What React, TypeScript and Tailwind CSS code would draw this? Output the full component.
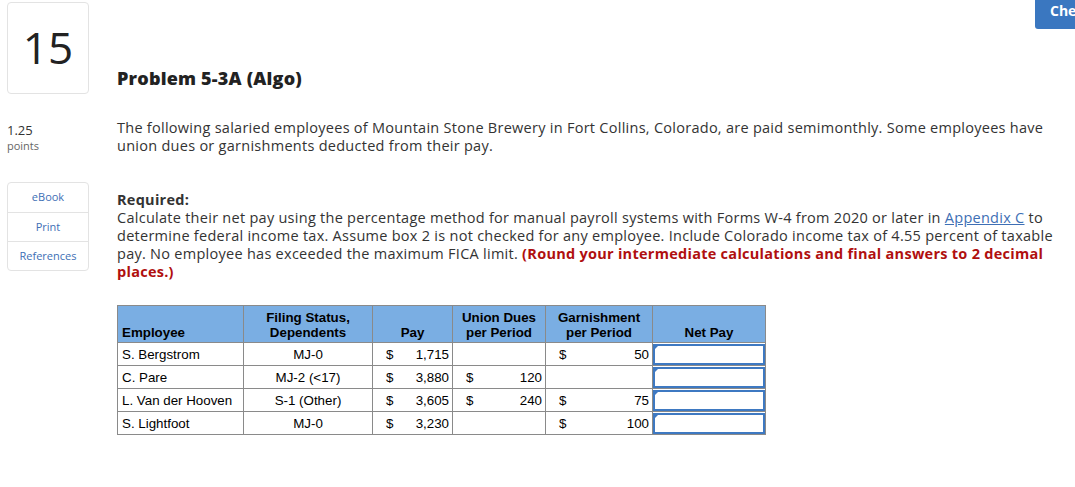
import React from "react";

const rows = [
  { name: "S. Bergstrom", status: "MJ-0", pay: "1,715", union: "", garn: "50" },
  { name: "C. Pare", status: "MJ-2 (<17)", pay: "3,880", union: "120", garn: "" },
  { name: "L. Van der Hooven", status: "S-1 (Other)", pay: "3,605", union: "240", garn: "75" },
  { name: "S. Lightfoot", status: "MJ-0", pay: "3,230", union: "", garn: "100" },
];

function Money({ value }: { value: string }) {
  if (!value) return null;
  return (
    <div className="flex justify-between pl-[13px] pr-[3px]">
      <span>$</span>
      <span>{value}</span>
    </div>
  );
}

function NetPayInput() {
  return (
    <div className="relative h-[21px] border-2 border-[#3e79c2] bg-white">
      <span className="absolute -left-[2px] -top-[2px] h-0 w-0 border-r-[7px] border-t-[7px] border-r-transparent border-t-[#3e79c2]" />
    </div>
  );
}

export default function App() {
  return (
    <div
      className="relative h-[487px] w-[1075px] overflow-hidden bg-white text-[#333]"
      style={{ fontFamily: "'Open Sans', Lato, sans-serif" }}
    >
      <button className="absolute left-[1035px] top-0 h-[29px] w-[90px] rounded-b-[3px] bg-[#3a77c0] pl-[15px] text-left text-[14px] font-bold text-white">
        Check my work
      </button>

      <div className="flex pl-[7px] pt-[2px]">
        {/* left column */}
        <div className="flex w-[110px] flex-col">
          <div className="flex h-[92px] w-[82px] items-center justify-center rounded-[4px] border border-[#e3e3e3] pb-[2px] text-[44px] text-[#222]">
            15
          </div>
          <div className="mt-[28px] text-[13px] leading-[17px] text-[#333]">1.25</div>
          <div className="text-[11px] leading-[14px] text-[#666]">points</div>
          <div className="mt-[29px] flex w-[82px] flex-col rounded-[4px] border border-[#e3e3e3] text-[11px] text-[#3e6fb5]">
            <div className="flex h-[30px] items-center justify-center border-b border-[#e3e3e3]">eBook</div>
            <div className="flex h-[29px] items-center justify-center border-b border-[#e3e3e3]">Print</div>
            <div className="flex h-[28px] items-center justify-center">References</div>
          </div>
        </div>

        {/* main column */}
        <div className="flex w-[945px] flex-col tracking-[0.27px]">
          <h1 className="mt-[64px] text-[18px] font-extrabold leading-[24px] tracking-[0.2px] text-[#222]">Problem 5-3A (Algo)</h1>
          <p className="mt-[29px] text-[14.5px] leading-[18px]">
            The following salaried employees of Mountain Stone Brewery in Fort Collins, Colorado, are paid semimonthly. Some employees have union dues or garnishments deducted from their pay.
          </p>
          <p className="mt-[36px] text-[14.5px] font-bold leading-[18px]">Required:</p>
          <p className="text-[14.5px] leading-[18px]">
            Calculate their net pay using the percentage method for manual payroll systems with Forms W-4 from 2020 or later in{" "}
            <span className="text-[#3e6fb5] underline">Appendix C</span> to determine federal income tax. Assume box 2 is not checked for any employee. Include Colorado income tax of 4.55 percent of taxable pay. No employee has exceeded the maximum FICA limit.{" "}
            <span className="font-bold text-[#b00f0f]">(Round your intermediate calculations and final answers to 2 decimal places.)</span>
          </p>

          <table
            className="mt-[24px] w-[649px] border-collapse text-[13.33px] tracking-normal text-black"
            style={{ fontFamily: "'Liberation Sans', Arial, sans-serif" }}
          >
            <thead>
              <tr className="bg-[#7aaee3] font-bold leading-[15px]">
                <th className="w-[126px] border border-[#8a8a8a] px-[4px] pb-[2px] text-left align-bottom font-bold">Employee</th>
                <th className="w-[129px] border border-[#8a8a8a] pb-[2px] pt-[4px] align-bottom font-bold">Filing Status,<br />Dependents</th>
                <th className="w-[80px] border border-[#8a8a8a] pb-[2px] align-bottom font-bold">Pay</th>
                <th className="w-[93px] border border-[#8a8a8a] pb-[2px] align-bottom font-bold">Union Dues<br />per Period</th>
                <th className="w-[107px] border border-[#8a8a8a] pb-[2px] align-bottom font-bold">Garnishment<br />per Period</th>
                <th className="border border-[#8a8a8a] pb-[2px] align-bottom font-bold">Net Pay</th>
              </tr>
            </thead>
            <tbody>
              {rows.map((r) => (
                <tr key={r.name} className="h-[23px] leading-[15px]">
                  <td className="border border-[#8a8a8a] px-[4px]">{r.name}</td>
                  <td className="border border-[#8a8a8a] text-center">{r.status}</td>
                  <td className="border border-[#8a8a8a]"><Money value={r.pay} /></td>
                  <td className="border border-[#8a8a8a]"><Money value={r.union} /></td>
                  <td className="border border-[#8a8a8a]"><Money value={r.garn} /></td>
                  <td className="border border-[#8a8a8a] p-0"><NetPayInput /></td>
                </tr>
              ))}
            </tbody>
          </table>
        </div>
      </div>
    </div>
  );
}
